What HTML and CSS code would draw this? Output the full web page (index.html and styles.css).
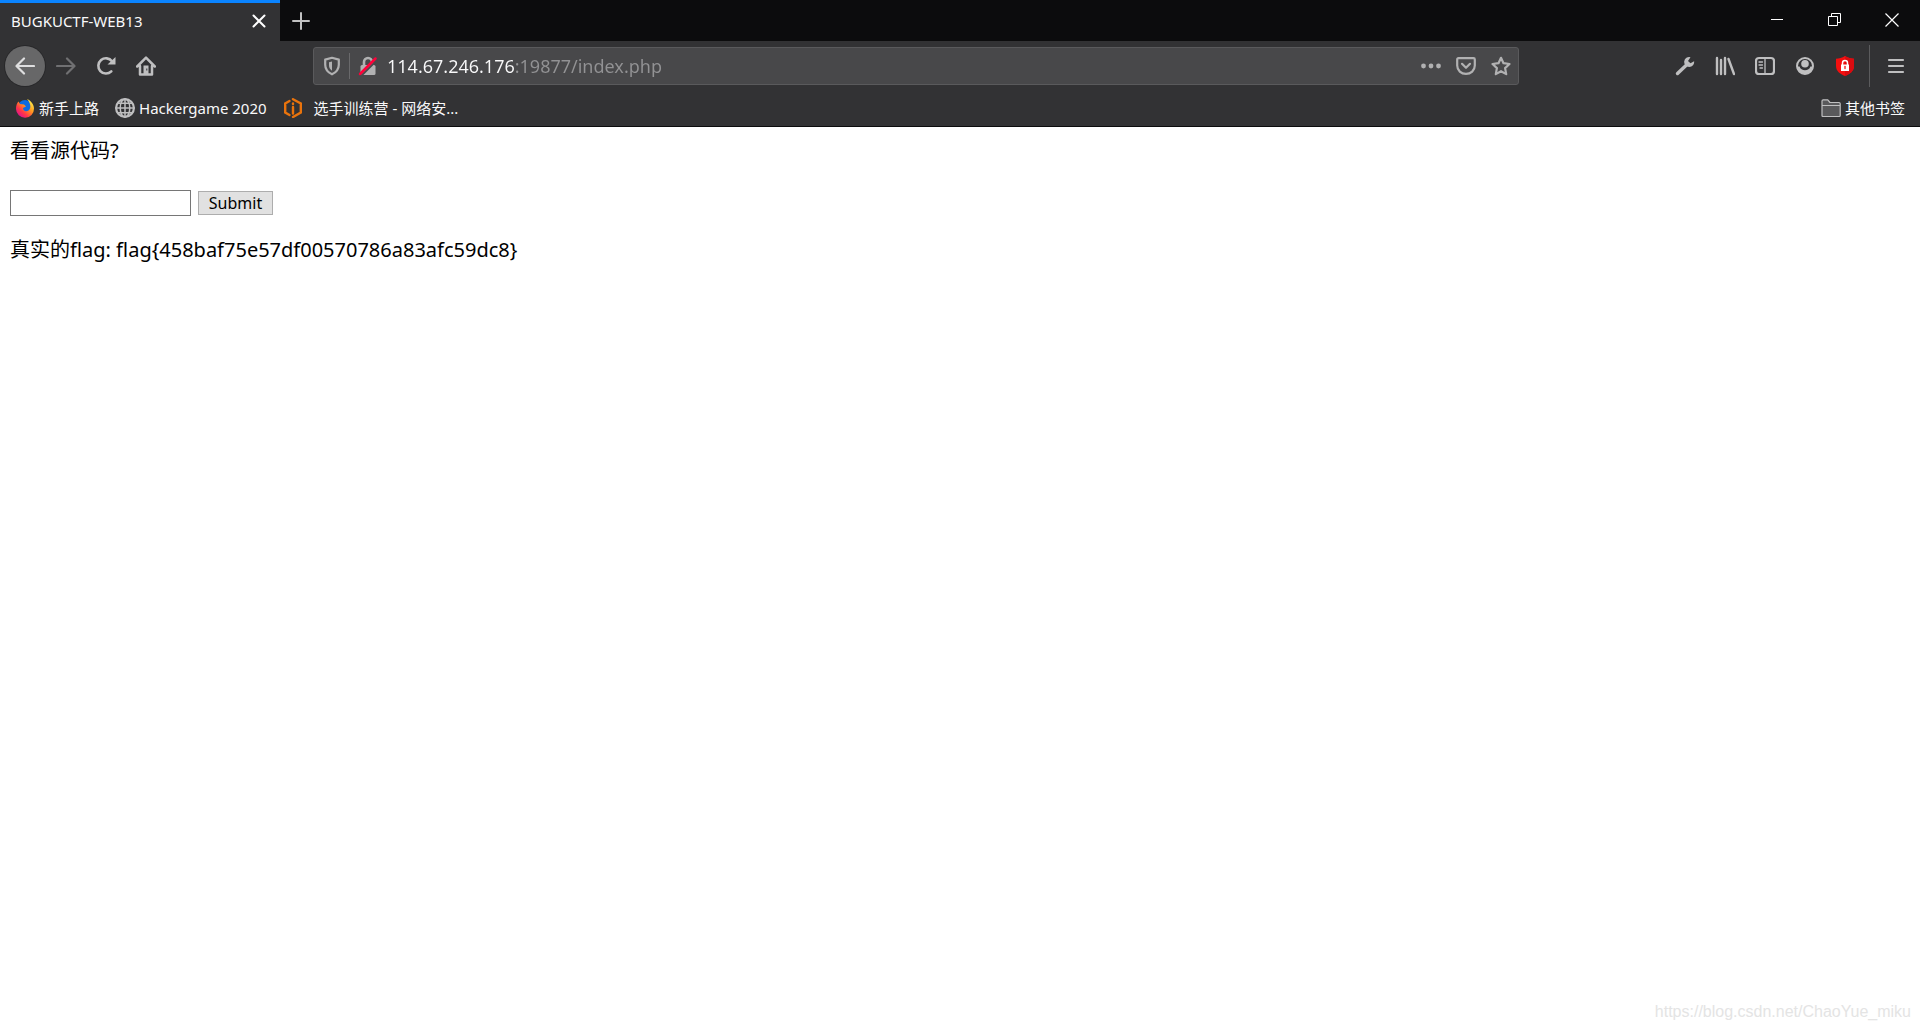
FILE: index.html
```html
<!DOCTYPE html>
<html lang="zh-CN">
<head>
<meta charset="utf-8">
<title>BUGKUCTF-WEB13</title>
<link rel="stylesheet" href="styles.css">
</head>
<body>
<header class="browser">
  <div class="tabbar">
    <div class="tab">
      <span class="tab-title">BUGKUCTF-WEB13</span>
      <button class="tab-close" aria-label="Close tab"><svg width="14" height="14" viewBox="0 0 14 14"><path d="M1.5 1.5l11 11M12.500 1.500l-11 11" stroke="#fff" stroke-width="2" stroke-linecap="round"/></svg></button>
    </div>
    <button class="new-tab" aria-label="New tab"><svg width="18" height="18" viewBox="0 0 18 18"><path d="M9 1v16M1 9h16" stroke="#c2c2c2" stroke-width="2" stroke-linecap="round"/></svg></button>
    <div class="window-controls">
      <button aria-label="Minimize"><svg width="13" height="13" viewBox="0 0 13 13"><path d="M0 6.500h12" stroke="#fff"/></svg></button>
      <button aria-label="Restore"><svg width="13" height="13" viewBox="0 0 13 13" fill="none" stroke="#fff"><path d="M.5 3.500h9v9h-9zM3.500 3.500v-3h9v9h-3"/></svg></button>
      <button aria-label="Close"><svg width="14" height="14" viewBox="0 0 14 14"><path d="M.5.5l13 13M13.500.5l-13 13" stroke="#fff" stroke-width="1.200"/></svg></button>
    </div>
  </div>

  <nav class="toolbar">
    <div class="nav-buttons">
      <button class="icon-button back" aria-label="Back"><svg viewBox="0 0 20 20"><path d="M9 2.500L1.500 10 9 17.500M2 10h17"/></svg></button>
      <button class="icon-button forward" aria-label="Forward" disabled><svg viewBox="0 0 20 20"><path d="M11 2.500L18.500 10 11 17.500M18 10H1"/></svg></button>
      <button class="icon-button" aria-label="Reload"><svg viewBox="0 0 20 20"><path d="M15.300 15.300A7.600 7.600 0 1 1 16 5.300" stroke-width="2.600"/><path class="solid" d="M19.500 1v7.500h-8z"/></svg></button>
      <button class="icon-button" aria-label="Home"><svg viewBox="0 0 20 20"><path d="M1.200 10.500L10 1.700l8.800 8.800M4 10v8.500h12V10" stroke-width="2.500"/><path class="solid" fill-rule="evenodd" d="M7.500 9.500h5V18h-5zM10.300 12.500v2h1v-2z"/></svg></button>
    </div>
    <form class="urlbar">
      <button type="button" aria-label="Tracking protection"><svg viewBox="0 0 20 20"><path d="M10 1.800l6.800 1.800v5.200c0 4.500-2.700 7.600-6.800 9.500-4.100-1.900-6.800-5-6.800-9.500V3.600z"/><path class="solid" d="M10 5.500v9.200C7.800 13.300 7 11.500 7 9V6.200z"/></svg></button>
      <span class="url-divider"></span>
      <button type="button" aria-label="Connection is not secure"><svg viewBox="0 0 20 20"><path d="M6 9V6a4 4 0 0 1 8 0v3" stroke-width="2.600"/><rect class="solid" x="2.500" y="9" width="15" height="10" rx="1.500"/><path d="M3.500 19.500L19 4" style="stroke:#48484a" stroke-width="2"/><path d="M2 18L17.500 2.500" style="stroke:#ff0039" stroke-width="2.500"/></svg></button>
      <input class="url-input" type="text" aria-label="Address" value="114.67.246.176:19877/index.php">
      <div class="page-actions">
        <button type="button" aria-label="Page actions"><svg viewBox="0 0 20 20"><g class="solid"><circle cx="2.500" cy="10" r="2.400"/><circle cx="10" cy="10" r="2.400"/><circle cx="17.500" cy="10" r="2.400"/></g></svg></button>
        <button type="button" aria-label="Save to Pocket"><svg viewBox="0 0 20 20"><path d="M2.500 2.200h15q1.300 0 1.300 1.300v6c0 5-4 8.400-8.800 8.400S1.200 14.500 1.200 9.500v-6q0-1.300 1.300-1.300zM6 7.800l4 4 4-4"/></svg></button>
        <button type="button" aria-label="Bookmark this page"><svg viewBox="0 0 20 20"><path d="M10 1.800l2.500 5.400 6 .8-4.400 4.100 1.100 6L10 15.200l-5.200 2.900 1.100-6L1.500 8l6-.8z"/></svg></button>
      </div>
    </form>
    <div class="tools">
      <button class="icon-button" aria-label="Developer tools"><svg viewBox="0 0 20 20"><path d="M2.500 17.500L12 8.500" stroke-width="3.400"/><path d="M15.500 1.200a5 5 0 1 0 3.600 4L15.500 7.300 13 5z" class="solid"/></svg></button>
      <button class="icon-button" aria-label="Library"><svg viewBox="0 0 20 20"><path d="M2 2v16M6 4v14M10 2v16M13.500 3L19 18" stroke-width="2.400"/></svg></button>
      <button class="icon-button" aria-label="Sidebar"><svg viewBox="0 0 20 20"><rect x="1" y="2" width="18" height="16" rx="3"/><path d="M10 2v16M4 6h3.500M4 9h3.500M5 12h2.500" stroke-width="1.300"/></svg></button>
      <button class="icon-button" aria-label="Account"><svg viewBox="0 0 20 20"><circle cx="10" cy="10" r="8" stroke-width="2"/><circle class="solid" cx="10" cy="7.800" r="3.800"/><path class="solid" d="M2 10.500h2.600c1.200 5 9.600 5 10.800 0H18c0 10-16 10-16 0z"/></svg></button>
      <button class="icon-button" aria-label="Security extension"><svg viewBox="0 0 20 20"><g style="stroke:none"><path d="M10 0c3 2 6 2.700 9 2.700V10c0 5-4 8-9 10-5-2-9-5-9-10V2.700C4 2.700 7 2 10 0z" fill="#f40f0f"/><path d="M10 0c3 2 6 2.700 9 2.700V10c0 5-4 8-9 10z" fill="#d90b10"/></g><path d="M7.500 9V7a2.500 2.500 0 0 1 5 0v2" stroke="#fff" stroke-width="1.500"/><path d="M6 8.500h8V15H6z" fill="#fff" stroke="none"/><path d="M10 10.500v2" stroke="#f40f0f" stroke-width="1.300"/></svg></button>
      <span class="tools-divider"></span>
      <button class="icon-button menu" aria-label="Menu"><svg viewBox="0 0 20 20"><path d="M3 4h14M3 10h14M3 16h14"/></svg></button>
    </div>
  </nav>

  <div class="bookmarks">
    <a href="#" class="bookmark"><svg viewBox="0 0 20 20"><defs><linearGradient id="fox" x1=".9" y1=".1" x2=".2" y2=".9"><stop offset="0" stop-color="#fff44f"/><stop offset=".4" stop-color="#ff9a1f"/><stop offset=".75" stop-color="#ff3647"/><stop offset="1" stop-color="#e31587"/></linearGradient></defs><g style="stroke:none"><circle cx="10" cy="9" r="7" fill="#0a6ae0"/><path d="M12 1c3 1 7 5 7 9.500A9 9 0 0 1 1 11C1 7.500 2 5 3.500 3.500L5 6l4 .5 2 2-3 1.500c0 3 3 4 5.500 2.500C17 10 15 4 12 1z" fill="url(#fox)"/></g></svg><span>新手上路</span></a>
    <a href="#" class="bookmark"><svg viewBox="0 0 20 20"><circle cx="10" cy="10" r="8.900"/><ellipse cx="10" cy="10" rx="4.800" ry="8.900" stroke-width="1.500"/><path d="M10 1v18M1 10h18M3 5.300h14M3 14.700h14" stroke-width="1.500"/></svg><span>Hackergame 2020</span></a>
    <a href="#" class="bookmark camp"><svg viewBox="0 0 20 20"><g style="stroke:#e9730c" stroke-width="2.400" stroke-linejoin="miter"><path d="M6.500 3L2.200 5.500v9L6.500 17M10 1.200l7.800 4.300v9L10 19M10 9v6.500"/><path d="M10 5.500v.5"/></g></svg><span>选手训练营 - 网络安...</span></a>
    <a href="#" class="bookmark other"><svg viewBox="0 0 20 20"><path d="M1 17.500V3q0-1.200 1.200-1.200h4.600L9 4.500h9q1.200 0 1.200 1.200v11.800q0 1-1 1H2q-1 0-1-1zM1 7.500h18" fill="#59595b" stroke-width="1.200"/></svg><span>其他书签</span></a>
  </div>
</header>

<main class="page">
  <p class="prompt">看看源代码?</p>
  <form class="answer">
    <input class="answer-input" type="text" aria-label="Answer">
    <button class="answer-submit" type="button">Submit</button>
  </form>
  <p class="flag">真实的flag: flag{458baf75e57df00570786a83afc59dc8}</p>
  <div class="watermark">https://blog.csdn.net/ChaoYue_miku</div>
</main>
</body>
</html>
```
FILE: styles.css
```css
* {
  box-sizing: border-box;
}

body {
  margin: 0;
  min-height: 100vh;
  display: flex;
  flex-direction: column;
  background: #fff;
  color: #000;
  font-family: "Noto Sans", "Noto Sans CJK SC", sans-serif;
}

button {
  display: flex;
  align-items: center;
  justify-content: center;
  padding: 0;
  border: 0;
  background: none;
  font: inherit;
}

svg {
  display: block;
}

.browser {
  background: #323234;
  border-bottom: 1px solid #0c0c0d;
  color: #f9f9fa;
}

/* Tab strip */
.tabbar {
  display: flex;
  height: 41px;
  background: #0c0c0d;
}

.tab {
  display: flex;
  align-items: center;
  justify-content: space-between;
  width: 280px;
  padding: 0 14px 2px 11px;
  border-top: 3px solid #0a84ff;
  background: #323234;
  font-size: 15px;
}

.tab-close {
  height: 36px;
}

.new-tab {
  width: 42px;
}

.window-controls {
  display: flex;
  margin-left: auto;
  padding-bottom: 2px;
}

.window-controls button {
  width: 57px;
}

/* Navigation toolbar */
.toolbar {
  display: flex;
  align-items: center;
  height: 50px;
  padding: 0 4px 0 5px;
}

.toolbar svg,
.bookmark svg {
  width: 20px;
  height: 20px;
  fill: none;
  stroke: #bfbfc0;
  stroke-width: 2.2;
  stroke-linecap: round;
  stroke-linejoin: round;
}

.toolbar .solid {
  fill: #bfbfc0;
  stroke: none;
}

.nav-buttons,
.tools {
  display: flex;
  align-items: center;
}

.icon-button {
  width: 40px;
  height: 40px;
}

.back {
  margin-right: 1px;
  border-radius: 50%;
  background: #676768;
  box-shadow: 0 0 0 1px #28282a;
}

.back svg {
  stroke: #dededf;
}

.forward svg {
  stroke: #707072;
}

.urlbar {
  display: flex;
  align-items: center;
  flex: 1;
  height: 38px;
  margin: 0 146px 0 147px;
  border: 1px solid #5a5a5c;
  border-radius: 3px;
  background: #48484a;
}

.urlbar button {
  width: 35px;
  height: 36px;
}

.urlbar svg {
  stroke: #b1b1b2;
}

.urlbar .solid {
  fill: #b1b1b2;
}

.url-divider {
  width: 1px;
  height: 26px;
  background: #69696b;
}

.url-input {
  flex: 1;
  min-width: 0;
  padding: 0 0 0 2px;
  border: 0;
  outline: 0;
  background: linear-gradient(to right, #f9f9fa 130px, #929294 130px);
  -webkit-background-clip: text;
  background-clip: text;
  color: transparent;
  font: 18px/26px "Noto Sans", sans-serif;
}

.page-actions {
  display: flex;
}

.tools-divider {
  width: 1px;
  height: 42px;
  margin: 0 6px 0 4px;
  background: #5b5b5d;
}

/* Bookmarks toolbar */
.bookmarks {
  display: flex;
  align-items: center;
  gap: 16px;
  height: 35px;
  padding: 0 15px 2px;
  font-size: 15px;
}

.bookmark {
  display: flex;
  align-items: center;
  gap: 4px;
  color: inherit;
  text-decoration: none;
}

.camp {
  gap: 11px;
}

.other {
  margin-left: auto;
}

/* Page content */
.page {
  position: relative;
  flex: 1;
  padding: 9px 10px;
  font-size: 20px;
  line-height: 30px;
}

.page p {
  margin: 0;
}

.answer {
  display: flex;
  align-items: center;
  gap: 7px;
  margin: 24px 0 19px;
}

.answer-input {
  width: 181px;
  height: 26px;
  border: 1px solid #767676;
  background: #fff;
}

.answer-submit {
  width: 75px;
  height: 24px;
  border: 1px solid #adadad;
  background: #e1e1e1;
  font-size: 16px;
  line-height: 22px;
}

.watermark {
  position: absolute;
  right: 9px;
  bottom: 8px;
  color: #e4e4e4;
  font: 16px/20px "Liberation Sans", sans-serif;
}
```
